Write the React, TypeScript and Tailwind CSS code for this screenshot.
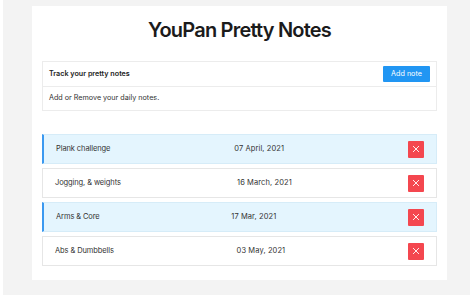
const notes = [
  { id: 1, title: "Plank challenge", date: "07 April, 2021", active: true },
  { id: 2, title: "Jogging, & weights", date: "16 March, 2021", active: false },
  { id: 3, title: "Arms & Core", date: "17 Mar, 2021", active: true },
  { id: 4, title: "Abs & Dumbbells", date: "03 May, 2021", active: false },
];

const App = () => {
  return (
    <div className="w-[474px] h-[299px] bg-white font-['Inter',sans-serif] text-[#333]">
      <div className="ml-[3px] w-[467px] h-[295px] bg-[#f3f3f3] pt-[6px] pl-[29px]">
        <div className="w-[415px] h-[274px] bg-white px-[10px] pt-[6.5px]">
          <h1 className="text-center text-[20px] leading-[34px] font-semibold text-[#1b1b1b] tracking-[-0.8px]">
            YouPan Pretty Notes
          </h1>
          <div className="mt-[14.5px] border border-[#ececec]">
            <div className="flex items-center justify-between h-[25px] px-[6px] border-b border-[#ececec]">
              <p className="text-[7.2px] font-semibold text-[#222]">Track your pretty notes</p>
              <button className="w-[47px] h-[16px] bg-[#2196f3] text-white text-[7.2px] rounded-[1px]">
                Add note
              </button>
            </div>
            <p className="h-[23px] flex items-center px-[6px] text-[7.2px] text-[#333]">
              Add or Remove your daily notes.
            </p>
          </div>
          <div className="mt-[23px] flex flex-col gap-[4px]">
            {notes.map(x => (
              <div
                key={x.id}
                className={
                  x.active
                    ? "flex items-center justify-between h-[30px] pl-[12px] pr-[12px] bg-[#e4f5fe] border border-[#d6ecf8] border-l-2 border-l-[#3b99f0]"
                    : "flex items-center justify-between h-[30px] pl-[12px] pr-[12px] bg-white border border-[#e6e6e6]"
                }
              >
                <p className="text-[7.5px] text-[#333] tracking-[-0.1px]">{x.title}</p>
                <p className="text-[7.5px] text-[#333] tracking-[0.1px]">{x.date}</p>
                <button className="w-[16px] h-[17px] bg-[#f4474f] rounded-[1px] flex items-center justify-center">
                  <svg width="8" height="8" viewBox="0 0 8 8">
                    <path d="M1 1 L7 7 M7 1 L1 7" stroke="white" strokeWidth="0.9" />
                  </svg>
                </button>
              </div>
            ))}
          </div>
        </div>
      </div>
    </div>
  );
};

export default App;
